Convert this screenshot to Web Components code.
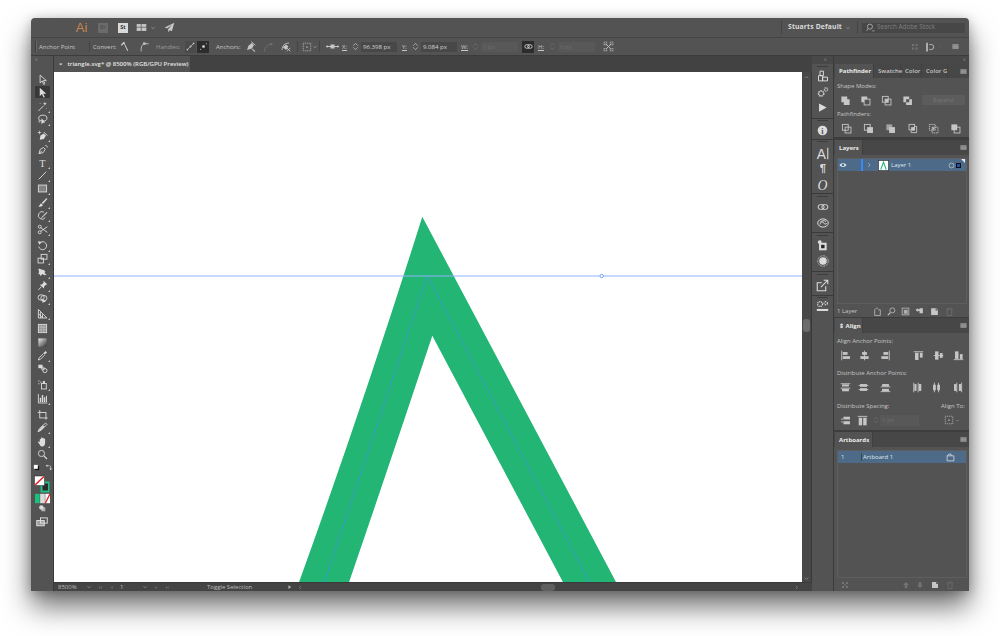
<!DOCTYPE html>
<html>
<head>
<meta charset="utf-8">
<title>triangle.svg</title>
<style>
  html, body { margin: 0; background: #fff; }
  body { box-sizing: border-box; height: 636px; padding: 18px 0 0 31px; overflow: hidden; font-family: "Open Sans", "Liberation Sans", sans-serif; }
</style>
</head>
<body>
<ai-window>
  <ai-menubar slot="top"></ai-menubar>
  <ai-controlbar slot="top"></ai-controlbar>
  <ai-toolbar slot="tools"></ai-toolbar>
  <ai-tabbar slot="doc" title-text="triangle.svg* @ 8500% (RGB/GPU Preview)"></ai-tabbar>
  <ai-canvas slot="canvas"></ai-canvas>
  <ai-vscroll slot="canvas"></ai-vscroll>
  <ai-statusbar slot="status"></ai-statusbar>
  <ai-dock slot="dock"></ai-dock>
  <ai-pathfinder slot="panels"></ai-pathfinder>
  <ai-layers slot="panels"></ai-layers>
  <ai-align slot="panels"></ai-align>
  <ai-artboards slot="panels"></ai-artboards>
</ai-window>

<script>
// Icons are drawn on a 16x16 box, class "o" means outlined.
const ICONS = {
  hollow: '<path class="o" d="M4.5 1.5v11.5l3-3 2.2 5 1.7-.8-2.1-4.6h4.2z"/>',
  solid: '<path d="M4 1v12.5l3.2-3.2 2.2 5 1.9-.8-2.2-4.8h4.4z"/>',
  wand: '<path class="o" d="M2 14.5 9.5 7"/><path d="M11.5 1l.8 2.2 2.2.8-2.2.8-.8 2.2-.8-2.2L8.5 4l2.2-.8zM4 3h1v1H4zM13 10h1v1h-1z"/>',
  lasso: '<ellipse class="o" cx="8.5" cy="6" rx="6" ry="4.3"/><path class="o" d="M4 9c-2 1-1.5 3 .5 3"/><path d="M6.5 6v9l2.2-2.2 3.3-.3z"/>',
  pen: '<path d="M4 14 5 8l5-3 3 3-3 5z"/><path class="o" d="M10 3l5 5"/><path d="M1 3h5v1H1zM3 1h1v5H3z"/>',
  curv: '<path class="o" d="M3 14 4.5 8 9.5 5l2.5 2.5-3 5z"/><path class="o" d="M3 14l4-4"/><path class="o" d="M12 2c1.5 0 3 1 3 3"/>',
  type: '<text x="8" y="14" text-anchor="middle" font-size="15" font-family="Liberation Serif, serif">T</text>',
  line: '<path class="o" d="M2.5 13.5 13.5 2.5"/>',
  rect: '<rect x="2" y="3" width="12" height="10" fill-opacity=".35"/><rect class="o" x="2" y="3" width="12" height="10"/>',
  brush: '<path d="M14 1.5 7 8.5l1.8 1.8 6.2-7.3z"/><path d="M6.3 9.5c-2.3 0-2 3-4.3 4.5 3.5.8 6.5-.3 6.3-2.6z"/>',
  shaper: '<path class="o" d="M12 11a5.5 5.5 0 1 1-2-8"/><path d="M14 3l1 1-7 7-2 1 1-2z"/>',
  scissors: '<circle class="o" cx="4" cy="4" r="2.2"/><circle class="o" cx="4" cy="12" r="2.2"/><path class="o" d="M5.5 5.5 15 12M5.5 10.5 15 4"/>',
  rotate: '<path class="o" d="M4 4.2a5.8 5.8 0 1 1-1.5 5.3"/><path d="M1.5 1.5 7 3.3 3 7z"/>',
  scale: '<rect class="o" x="1.5" y="7.5" width="8" height="7"/><rect class="o" x="6" y="2" width="8.5" height="7"/>',
  warp: '<path d="M2 3c3-2 4 2 7 1l3 2-1 3 3 2-3 1-3-2-3 3-1-3-2 1 1-4z"/>',
  pin: '<path d="M9.5 1 15 6.5l-2 .5-2.5 2.5-.5 3L4 7l3-.5L9.5 4z"/><path class="o" d="M6 10l-4 4.5"/>',
  builder: '<ellipse class="o" cx="6" cy="6.5" rx="4.5" ry="4"/><ellipse class="o" cx="10" cy="7.5" rx="4.5" ry="4"/><path d="M8 8v7l2-2 3 0z"/>',
  persp: '<path class="o" d="M2 14.5V2l12.5 12.5z"/><path class="o" d="M5 14.5V6M8 14.5V9M2 8l6.5 6.5"/>',
  mesh: '<rect x="2" y="2" width="12" height="12" fill-opacity=".45"/><rect class="o" x="2" y="2" width="12" height="12"/><path class="o" stroke-dasharray="1.5 1.5" d="M6 2v12M10 2v12M2 6h12M2 10h12"/>',
  grad: '<defs><linearGradient id="gr" x1="0" y1="0" x2="1" y2="1"><stop offset="0" stop-color="#eee"/><stop offset="1" stop-color="#333"/></linearGradient></defs><rect x="2" y="2" width="12" height="12" style="fill:url(#gr)"/>',
  drop: '<path d="M12.5 1.5l2 2-3.2 3.2-2-2z"/><path class="o" d="M9.3 5.2 3 11.5 2 14.5l3-1 6.3-6.3"/>',
  blend: '<rect x="2" y="2.5" width="6" height="5"/><circle cx="8.5" cy="8" r="3" opacity=".6"/><circle class="o" cx="11.5" cy="11" r="3"/>',
  spray: '<rect class="o" x="6.5" y="6.5" width="7" height="8"/><path d="M8.5 3h3v3.5h-3zM2 2h1.5v1.5H2zM2 6h1.5v1.5H2zM4.5 4h1.5v1.5H4.5z"/>',
  graph: '<path class="o" d="M2 1.5v13h13"/><path d="M4 7h2v6H4zM7 3h2v10H7zM10 6h2v7h-2zM13 4h1.5v9H13z"/>',
  artboard: '<rect class="o" x="4" y="5" width="9" height="8"/><path class="o" d="M1 5h3M4 1.5V5M13 13h2.5M13 13v2.5"/>',
  slice: '<path class="o" d="M12.5 1.5l2 2-8.5 8.5-4.5 2 2-4.5z"/><path d="M9 5l2 2-5 5-4 2 2-4z"/>',
  hand: '<path d="M4 9V5a1 1 0 0 1 1.8-.3V3a1 1 0 0 1 2 0v.7a1 1 0 0 1 2 0v1a1 1 0 0 1 2 0v5.5c0 3-1.8 5-4 5-2 0-3-1-4-3L1.5 9c-.5-1 1.5-1.8 2.5 0z"/>',
  zoom: '<circle class="o" cx="6.5" cy="6.5" r="4.5"/><path class="o" style="stroke-width:1.8" d="M10 10l4.5 4.5"/>',
  defaults: '<rect x="5" y="5" width="9" height="9" style="fill:#111"/><rect x="2" y="2" width="9" height="9" style="fill:#fff"/>',
  swap: '<path class="o" d="M4 4h6c2 0 3 1 3 3v5"/><path d="M5.5 1v6L1.5 4zM10 10h6l-3 4z"/>',
  cmodes: '<rect x="0" y="3" width="5" height="10" style="fill:#17c27b"/><rect x="5.5" y="3" width="5" height="10" style="fill:#ddd"/><rect x="11" y="3" width="5" height="10" style="fill:#fff"/><path d="M11 13l5-10" stroke="#e01f26" stroke-width="1.4"/>',
  draw: '<circle cx="6" cy="6" r="4"/><rect x="6" y="6" width="7" height="7" opacity=".7"/>',
  screen: '<rect class="o" x="6" y="2.5" width="9" height="7"/><rect x="1" y="6" width="10" height="7" fill-opacity=".55"/><rect class="o" x="1" y="6" width="10" height="7"/>',
  plane: '<path d="M15 1 1 8l3.5 1.5L11 4.5 6 10.5V15l2.5-3 3 1.5z"/>',
  workspace: '<rect x="1" y="3" width="6" height="4"/><rect x="8" y="3" width="7" height="4"/><rect x="1" y="8" width="6" height="5"/><rect x="8" y="8" width="7" height="5"/>',
  chev: '<path class="o" d="M4 6l4 4 4-4"/>',
  chevup: '<path class="o" d="M4 10l4-4 4 4"/>',
  chevr: '<path class="o" d="M6 3l5 5-5 5"/>',
  chevl: '<path class="o" d="M10 3 5 8l5 5"/>',
  mag: '<circle class="o" cx="7" cy="6.5" r="4.5"/><path class="o" d="M3.5 10 1 14M11 13l2 2 2-2"/>',
  conv1: '<path d="M7 1 2.5 5.5 4 7l3-3 5 10.5 1.5-.8z"/><circle cx="7" cy="3" r="1.5"/>',
  conv2: '<path class="o" d="M3 15c0-7 2-11 5-11h6"/><rect x="6" y="2" width="3.5" height="3.5"/>',
  handle1: '<path class="o" d="M2 14 14 2"/><rect x="6.5" y="6.5" width="3" height="3"/><circle cx="2.5" cy="13.5" r="1.5"/><circle cx="13.5" cy="2.5" r="1.5"/>',
  handle2: '<rect x="6" y="6" width="4" height="4"/><circle cx="3" cy="13" r=".9"/><circle cx="13" cy="3" r=".9"/>',
  anch1: '<path d="M3 13 5 7l5-4 3 3-3 5z"/><path class="o" d="M9 1l6 5"/><path d="M11 11l4 4-1 1-4-4z"/>',
  anch2: '<path class="o" d="M2 15C3 8 7 4 14 3"/><rect x="12" y="1.5" width="3" height="3"/>',
  anch3: '<path class="o" d="M3 13c0-6 4-10 10-10"/><path d="M4 9l5-4 3 3-3 5z"/><path class="o" d="M10 10l5 5M15 10l-5 5"/>',
  dash: '<rect class="o" stroke-dasharray="1.6 1.6" x="2" y="2" width="12" height="12"/><path d="M7 7h2v2H7z"/>',
  aline: '<path class="o" d="M0 8h16"/><rect x="5.5" y="5.5" width="5" height="5"/><circle cx="1.5" cy="8" r="1.3"/><circle cx="14.5" cy="8" r="1.3"/>',
  step: '<path class="o" d="M4 6.5l4-4 4 4M4 9.5l4 4 4-4"/>',
  link: '<rect class="o" x="1.5" y="4.8" width="8" height="6.4" rx="3.2"/><rect class="o" x="6.5" y="4.8" width="8" height="6.4" rx="3.2"/>',
  xform: '<path class="o" d="M4 4l8 8M12 4l-8 8"/><path d="M1 1h5v5H1zM10 1h5v5h-5zM1 10h5v5H1zM10 10h5v5h-5z" fill-opacity=".8"/><path class="o" style="stroke:#535353" d="M2.5 2.5h2v2h-2zM11.5 2.5h2v2h-2zM2.5 11.5h2v2h-2zM11.5 11.5h2v2h-2z"/>',
  dots: '<path d="M2 2h4v4H2zM9 2h4v4H9zM2 9h4v4H2zM9 9h4v4H9z"/>',
  alignto: '<path d="M2 1h2.5v14H2z"/><path class="o" d="M7 4h3a4 4 0 0 1 0 8H7"/>',
  menu: '<path d="M1 3h14v10H1z" fill-opacity=".75"/><path d="M1 6h14M1 9.5h14" stroke="#535353" stroke-width="1"/>',
  // dock
  library: '<path class="o" d="M4 1.5h4.5v6H4zM2 7.5h5.5v7H2zM7.5 9.5H14v5H7.5z"/>',
  gears: '<circle class="o" style="stroke-width:2" stroke-dasharray="2 1" cx="5.5" cy="10" r="3.5"/><circle class="o" style="stroke-width:1.6" stroke-dasharray="1.5 1" cx="12" cy="4.5" r="2.2"/>',
  play: '<path d="M3 2l11 6-11 6z"/>',
  info: '<circle cx="8" cy="8" r="7"/><text x="8" y="12.5" text-anchor="middle" font-size="12" font-weight="700" font-family="Liberation Serif, serif" style="fill:#535353">i</text>',
  charA: '<text x="6.5" y="14.5" text-anchor="middle" font-size="17" font-family="Liberation Sans, sans-serif">A</text><path class="o" d="M14.5 1v14"/>',
  para: '<text x="8" y="13.5" text-anchor="middle" font-size="15" font-weight="700" font-family="Liberation Sans, sans-serif">¶</text>',
  italicO: '<text x="8" y="14" text-anchor="middle" font-size="17" font-style="italic" font-family="Liberation Serif, serif">O</text>',
  cc: '<ellipse class="o" cx="8" cy="8" rx="7" ry="5.5"/><path class="o" d="M4 10c1-4 4-4 5-2s3 2 4 0M4 7c2-2 6-3 8-1"/>',
  symbol: '<rect x="3" y="4" width="11" height="11"/><rect x="6" y="7" width="5" height="5" style="fill:#262626"/><circle cx="4" cy="3" r="2.8"/>',
  burst: '<circle cx="8" cy="8" r="5"/><circle class="o" stroke-dasharray="1 1" cx="8" cy="8" r="7"/>',
  exportI: '<path class="o" d="M12 9v5.5H1.5V4.5H7"/><path class="o" d="M6 10l8-8M9.5 1.500h5v5"/>',
  gears2: '<circle class="o" style="stroke-width:1.6" stroke-dasharray="1.5 1" cx="5" cy="5" r="3"/><circle class="o" style="stroke-width:1.4" stroke-dasharray="1.5 1" cx="12" cy="4" r="2"/><rect x="1" y="11" width="14" height="2.5"/>',
  // pathfinder
  unite: '<path d="M2 2h8.5v4H14v8.5H5.5V10.5H2z"/>',
  minus: '<path d="M2 2h8.5v4H6v4.5H2z"/><rect class="o" x="6" y="6" width="8.5" height="8.5"/>',
  inter: '<rect class="o" x="2" y="2" width="8.5" height="8.5"/><rect class="o" x="6" y="6" width="8.5" height="8.5"/><rect x="6" y="6" width="4.5" height="4.5"/>',
  exclude: '<path d="M2 2h8.5v4H6v4.5H2zM10.5 6H14.5v8.5H6v-4h4.5z"/>',
  divide: '<rect class="o" x="2" y="2" width="8.5" height="8.5"/><rect class="o" x="6" y="6" width="8.5" height="8.5"/>',
  trim: '<rect class="o" x="2" y="2" width="8.5" height="8.5"/><rect x="6" y="6" width="8.5" height="8.5"/>',
  merge: '<rect x="2" y="2" width="8.5" height="8.5" opacity=".7"/><rect x="6" y="6" width="8.5" height="8.5"/>',
  crop: '<rect class="o" x="3" y="2" width="8" height="8"/><rect x="6" y="6" width="5" height="5"/><path class="o" d="M11 5h3v9H6v-3"/>',
  outline: '<rect class="o" stroke-dasharray="2 1" x="2" y="2" width="8.5" height="8.5"/><rect class="o" stroke-dasharray="2 1" x="6" y="6" width="8.5" height="8.5"/><rect x="6.5" y="6.5" width="3" height="3"/>',
  minusb: '<rect x="2" y="2" width="8.5" height="8.5"/><rect class="o" x="6" y="6" width="8.5" height="8.5"/>',
  // align
  aL: '<path class="o" d="M2.5 1v14"/><rect x="4" y="3" width="7" height="4"/><rect x="4" y="9" width="10.5" height="4"/>',
  aC: '<path class="o" d="M8 1v14"/><rect x="4.5" y="3" width="7" height="4"/><rect x="2" y="9" width="12" height="4"/>',
  aR: '<path class="o" d="M13.5 1v14"/><rect x="5" y="3" width="7" height="4"/><rect x="2" y="9" width="10" height="4"/>',
  aT: '<path class="o" d="M1 2.5h14"/><rect x="3" y="4" width="5" height="10.5"/><rect x="10" y="4" width="4" height="7"/>',
  aM: '<path class="o" d="M1 8h14"/><rect x="3" y="2" width="5" height="12"/><rect x="10" y="4.5" width="4" height="7"/>',
  aB: '<path class="o" d="M1 14h14"/><rect x="3" y="2" width="5" height="11"/><rect x="10" y="6" width="4" height="7"/>',
  dT: '<path class="o" d="M1 2.5h14M1 9h14"/><rect x="3" y="3.5" width="10" height="3"/><rect x="3" y="10" width="10" height="3.5"/>',
  dM: '<path class="o" d="M1 5h14M1 11h14"/><rect x="3" y="3" width="10" height="4"/><rect x="3" y="9" width="10" height="4"/>',
  dB: '<path class="o" d="M1 7h14M1 14h14"/><rect x="3" y="3" width="10" height="3.5"/><rect x="3" y="10" width="10" height="3.5"/>',
  dL: '<path class="o" d="M2.5 1v14M9 1v14"/><rect x="3.5" y="3" width="3" height="10"/><rect x="10" y="3" width="3.5" height="10"/>',
  dC: '<path class="o" d="M5 1v14M11 1v14"/><rect x="3" y="4" width="4" height="8"/><rect x="9" y="4" width="4" height="8"/>',
  dR: '<path class="o" d="M7 1v14M14 1v14"/><rect x="3" y="3" width="3.5" height="10"/><rect x="10" y="3" width="3.5" height="10"/>',
  sH: '<path d="M2 5h2v2H2zM2 9h2v2H2z"/><rect x="5" y="2.5" width="9.5" height="4"/><rect x="5" y="9" width="9.5" height="4.5"/>',
  sV: '<rect x="2.5" y="4" width="5" height="11"/><rect x="9" y="4" width="5" height="11"/><path class="o" d="M1 2h14"/>',
  // layers
  eye: '<path d="M1 8c3-5 11-5 14 0-3 5-11 5-14 0z"/><circle cx="8" cy="8" r="2.5" style="fill:#4d6a88"/>',
  target: '<circle class="o" cx="8" cy="8" r="5.5"/>',
  sublayer: '<path class="o" d="M3 5v10h10V5h-4M3 5l3-3h3"/>',
  search: '<circle class="o" cx="9.5" cy="6" r="4.5"/><path class="o" style="stroke-width:2" d="M6 10l-4.5 4.5"/>',
  clip: '<rect class="o" x="2" y="2" width="12" height="12"/><rect x="5" y="5" width="7" height="7" opacity=".8"/>',
  newsub: '<path d="M1 5l4-3v2h3V2h6v9H8V7H5v2z"/>',
  newlayer: '<path d="M2 2h9l3 3v9H2z"/><path style="fill:#535353" d="M10 2l4 4h-4z"/>',
  trash: '<path class="o" d="M4 4v11h8V4M2 3.5h12M6 2h4"/>',
  abthumb: '<path class="o" d="M2 5h12v9H2zM2 5l3-3h4v3"/>',
  gather: '<path d="M2 2h4v4H2zM10 2h4v4h-4zM2 10h4v4H2zM10 10h4v4h-4z"/><path class="o" d="M6 6l4 4M10 6l-4 4"/>',
  up: '<path d="M8 2l6 6h-3.5v6h-5V8H2z"/>',
  down: '<path d="M8 14 2 8h3.5V2h5v6H14z"/>',
  first: '<path d="M3 3h2v10H3zM13 3v10L6 8z"/>',
  prev: '<path d="M12 3v10L5 8z"/>',
  next: '<path d="M4 3v10l7-5z"/>',
  last: '<path d="M11 3h2v10h-2zM3 3v10l7-5z"/>',
  thumb: '<rect x=".5" y=".5" width="15" height="15" style="fill:#fff" stroke="#2f2f2f"/><path class="o" style="stroke:#22b573;stroke-width:1.6" d="M4 14 8 3l4 11"/>'
};

function icon(name, size = 11, cls = '') {
  return `<svg class="${cls}" width="${size}" height="${size}" viewBox="0 0 16 16">${ICONS[name]}</svg>`;
}

// items are [left x, width, html]. Gaps are margins, so the row stays plain flex flow.
function strip(origin, items) {
  let cur = origin;
  return items.map(([x, w, html]) => {
    const m = +(x - cur).toFixed(2);
    cur = x + w;
    return `<span class="cell" style="margin-left:${m}px;width:${w}px">${html}</span>`;
  }).join('');
}
const ic = (cx, name, size = 11, cls = '') => [cx - size / 2, size, icon(name, size, cls)];
const txt = (x, w, s, cls = '') => [x, w, `<span class="lbl ${cls}">${s}</span>`];
const sep = (x) => [x, 1, '<i class="sep"></i>'];
const row = (origin, h, mt, items) =>
  `<div class="row" style="height:${h}px;margin-top:${mt}px">${strip(origin, items)}</div>`;

// column flow: items are [center y, height, html]
function vflow(origin, items) {
  let cur = origin;
  return items.map(([y, h, html]) => {
    const m = +(y - h / 2 - cur).toFixed(2);
    cur = y + h / 2;
    return `<div class="vcell" style="margin-top:${m}px;height:${h}px">${html}</div>`;
  }).join('');
}

const SHARED = `
  * { box-sizing: border-box; }
  :host { display: block; box-sizing: border-box; flex: none; color: #c6c6c6; font-size: 6px; line-height: 1; }
  svg { display: block; flex: none; fill: currentColor; overflow: visible; }
  .o { fill: none; stroke: currentColor; stroke-width: 1.3; }
  .dim { opacity: .28; }
  .row { display: flex; align-items: center; }
  .cell { display: flex; align-items: center; justify-content: center; flex: none; height: 100%; white-space: nowrap; }
  .vcell { display: flex; align-items: center; justify-content: center; flex: none; position: relative; }
  .lbl { width: 100%; white-space: nowrap; }
  .sep { display: block; width: 1px; height: 70%; background: #444; }
`;

class AiBase extends HTMLElement {
  connectedCallback() {
    if (this.shadowRoot) return;
    this.attachShadow({mode: 'open'});
    this.shadowRoot.innerHTML = `<style>${SHARED}${this.css()}</style>${this.html()}`;
  }
  css() { return ''; }
  html() { return '<slot></slot>'; }
}

class AiWindow extends AiBase {
  css() { return `
    :host { width: 938px; height: 573px; background: #535353; border-radius: 4px 4px 0 0;
      box-shadow: 0 16px 28px rgba(0,0,0,.55), 0 2px 12px rgba(0,0,0,.25); font-family: "Open Sans", "Liberation Sans", sans-serif; }
    .main { display: flex; height: 535px; }
    .doc { width: 758px; flex: none; display: flex; flex-direction: column; }
    .mid { display: flex; height: 510px; }
    .panels { width: 135px; flex: none; background: #3d3d3d; }
  `; }
  html() { return `
    <slot name="top"></slot>
    <div class="main">
      <slot name="tools"></slot>
      <div class="doc">
        <slot name="doc"></slot>
        <div class="mid"><slot name="canvas"></slot></div>
        <slot name="status"></slot>
      </div>
      <slot name="dock"></slot>
      <div class="panels"><slot name="panels"></slot></div>
    </div>`; }
}

class AiMenubar extends AiBase {
  css() { return `
    :host { height: 20px; border-bottom: 1px solid #454545; border-radius: 4px 4px 0 0; }
    .row { height: 19px; }
    .ai { color: #c8844f; font: 13px "Liberation Sans", sans-serif; }
    .box { display: flex; width: 100%; height: 10px; align-items: center; justify-content: center; font-weight: 700; font-size: 5.5px; }
    .br { background: #6b6b6b; color: #555; }
    .st { background: #d9d9d9; color: #333; }
    .name { font-size: 6.8px; font-weight: 700; color: #dcdcdc; letter-spacing: .15px; }
    .search { display: flex; align-items: center; gap: 2px; width: 100%; height: 10px; padding-left: 4px; background: #474747; color: #7f7f7f; font-size: 6.3px; }
    .search svg { color: #c0c0c0; }
  `; }
  html() {
    return `<div class="row">${strip(31, [
      [76, 11, '<span class="ai">Ai</span>'],
      [98, 10, '<span class="box br">Br</span>'],
      [118, 10, '<span class="box st">St</span>'],
      ic(141.5, 'workspace', 11),
      ic(153, 'chev', 6),
      ic(169, 'plane', 11),
      sep(780.5),
      txt(788, 52, 'Stuarts Default', 'name'),
      ic(847.5, 'chev', 6),
      sep(857),
      [862, 103, `<span class="search">${icon('mag', 9)}<span>Search Adobe Stock</span></span>`]
    ])}</div>`;
  }
}

class AiControlbar extends AiBase {
  css() { return `
    :host { height: 18px; border-bottom: 1px solid #3c3c3c; }
    .row { height: 17px; }
    .btn { display: flex; width: 100%; height: 12px; align-items: center; justify-content: center; background: #4a4a4a; }
    .btn.on { background: #2c2c2c; color: #eee; }
    .grip { display: block; width: 1px; height: 11px; background: #3f3f3f; box-shadow: 1px 0 #666; }
    .u { text-decoration: underline; }
    .input { display: block; width: 100%; height: 10px; padding: 2px 0 0 2px; background: #484848; color: #d4d4d4; font-size: 6.1px; }
    .off { background: #585858; color: #6e6e6e; }
    .mut { color: #9a9a9a; }
  `; }
  html() {
    const field = (x, w, s, cls = '') => [x, w, `<span class="input ${cls}">${s}</span>`];
    return `<div class="row">${strip(31, [
      [34, 2, '<i class="grip"></i>'],
      txt(39, 35, 'Anchor Point'),
      sep(89),
      txt(93, 22, 'Convert:'),
      ic(124, 'conv1'),
      ic(144, 'conv2'),
      txt(156, 23, 'Handles:', 'mut'),
      [185, 11, `<span class="btn">${icon('handle1', 9)}</span>`],
      [197, 12, `<span class="btn on">${icon('handle2', 9)}</span>`],
      txt(216, 24, 'Anchors:'),
      ic(250, 'anch1'),
      ic(268, 'anch2', 10, 'dim'),
      ic(285, 'anch3'),
      sep(296.5),
      ic(307, 'dash', 10),
      ic(315, 'chev', 6),
      sep(319),
      ic(332, 'aline', 13),
      txt(342, 6, 'X:', 'u'),
      ic(355.5, 'step', 9),
      field(361, 36, '96.398 px'),
      txt(402, 6, 'Y:', 'u'),
      ic(415.5, 'step', 9),
      field(421, 36, '9.084 px'),
      txt(461, 6, 'W:', 'u'),
      ic(475.5, 'step', 9, 'dim'),
      field(481, 37, '0 px', 'off'),
      [522, 12, `<span class="btn on">${icon('link', 9)}</span>`],
      txt(538, 6, 'H:', 'u'),
      ic(552.5, 'step', 9, 'dim'),
      field(558, 37, '0 px', 'off'),
      ic(608.5, 'xform', 11),
      ic(915, 'dots', 8, 'dim'),
      ic(930, 'alignto', 10),
      ic(939.5, 'chev', 5, 'dim'),
      ic(955, 'menu', 7)
    ])}</div>`;
  }
}

class AiToolbar extends AiBase {
  css() { return `
    :host { width: 23px; height: 535px; background: #535353; border-right: 1px solid #3a3a3a; color: #dcdcdc; }
    .top { display: block; color: #9a9a9a; font-size: 5px; padding: 1px 0 0 4px; height: 7px; letter-spacing: -.5px; }
    .sel { width: 15px; height: 12px; background: #383838; }
    .vcell { width: 22px; }
    .more::after { content: ""; position: absolute; right: 3px; bottom: 0; border: 1.2px solid transparent; border-right-color: #ccc; border-bottom-color: #ccc; }
  `; }
  html() {
    const T = [
      ['hollow', 79], ['solid', 92, 'sel'], ['wand', 106, 'more'], ['lasso', 119, 'more'],
      ['pen', 135, 'more'], ['curv', 149], ['type', 162, 'more'], ['line', 175, 'more'], ['rect', 188, 'more'],
      ['brush', 202, 'more'], ['shaper', 215, 'more'], ['scissors', 229, 'more'], ['rotate', 245, 'more'],
      ['scale', 258, 'more'], ['warp', 272, 'more'], ['pin', 285, 'more'], ['builder', 298, 'more'],
      ['persp', 313, 'more'], ['mesh', 328], ['grad', 342], ['drop', 355, 'more'], ['blend', 368],
      ['spray', 384, 'more'], ['graph', 398, 'more'], ['artboard', 414], ['slice', 427, 'more'],
      ['hand', 441, 'more'], ['zoom', 454]
    ];
    const items = T.map(([n, y, c]) => [y - 56 - 7, 13,
      c === 'sel' ? `<div class="row sel" style="justify-content:center">${icon(n, 11)}</div>` :
      c === 'more' ? `<div class="more" style="position:absolute;inset:0;display:flex;align-items:center;justify-content:center">${icon(n, 11)}</div>` : icon(n, 11)]);
    items.push([467.5 - 63, 8, `<div class="row" style="width:22px;height:8px;gap:5px;padding-left:2px">${icon('defaults', 7)}${icon('swap', 7)}</div>`]);
    items.push([484 - 63, 22, `<svg width="22" height="22" viewBox="0 0 22 22">
      <rect x="9.5" y="8.5" width="9" height="11" style="fill:#1fc083"/><rect x="11.5" y="10.5" width="5.5" height="7" style="fill:#2b2b2b"/>
      <rect x="3.5" y="3" width="10" height="9.5" style="fill:#fff" stroke="#222" stroke-width=".5"/><path d="M4 12 13 3.5" stroke="#e01f26" stroke-width="1.5"/></svg>`]);
    items.push([498 - 63, 7, icon('cmodes', 15)]);
    items.push([508.5 - 63, 10, icon('draw', 9)]);
    items.push([522 - 63, 11, icon('screen', 12)]);
    return `<span class="top">»</span>${vflow(0, items)}`;
  }
}

class AiTabbar extends AiBase {
  css() { return `
    :host { height: 16px; background: #424242; }
    .tab { display: flex; align-items: center; width: 136px; height: 16px; background: #535353; color: #e4e4e4; font-weight: 600; padding-left: 5px; gap: 5px; white-space: nowrap; }
  `; }
  html() {
    return `<div class="tab"><span>×</span><span>${this.getAttribute('title-text')}</span></div>`;
  }
}

class AiCanvas extends AiBase {
  css() { return `
    :host { width: 748px; height: 510px; background: #fff; }
    svg { width: 748px; height: 510px; }
  `; }
  html() { return `
    <svg viewBox="54 72 748 510">
      <path style="fill:#22b573" d="M422.3 216.7 616 582H562.9L432.3 335.7Q392 457 349.1 582H299.1Q363 405 422.3 216.7Z"/>
      <path style="fill:none" stroke="#3f8fe8" stroke-width=".7" d="M324.3 582 427.3 276 589.5 582"/>
      <path stroke="#8fb2ff" stroke-width="1" d="M54 276H802"/>
      <rect x="600" y="274.3" width="3.4" height="3.4" rx="1.7" style="fill:#fff" stroke="#6f9bf5" stroke-width=".9"/>
    </svg>`; }
}

class AiVscroll extends AiBase {
  css() { return `
    :host { width: 10px; height: 510px; background: #484848; border-right: 1px solid #383838; color: #aaa; }
    .thumb { width: 7px; height: 13px; border-radius: 3px; background: #6c6c6c; margin-left: 1px; }
    svg { margin-left: 1px; }
  `; }
  html() {
    return `<div style="height:2px"></div>${icon('chevup', 7)}
      <div style="height:238px"></div><div class="thumb"></div>
      <div style="height:243px"></div>${icon('chev', 7)}`;
  }
}

class AiStatusbar extends AiBase {
  css() { return `
    :host { height: 9px; background: #444; border-top: 1px solid #3a3a3a; color: #bdbdbd; }
    .row { height: 8px; }
    .thumb { display: block; width: 100%; height: 7px; border-radius: 3px; background: #5f5f5f; }
  `; }
  html() {
    return `<div class="row">${strip(54, [
      txt(58, 20, '8500%'),
      ic(89, 'chev', 6),
      ic(100, 'first', 5, 'dim'), ic(111, 'prev', 5, 'dim'),
      txt(120, 4, '1'),
      ic(145, 'chev', 6),
      ic(156, 'next', 5, 'dim'), ic(167, 'last', 5, 'dim'),
      txt(207, 46, 'Toggle Selection'),
      ic(290, 'next', 6),
      ic(300, 'chevl', 5),
      [541, 14, '<i class="thumb"></i>'],
      ic(796, 'chevr', 5)
    ])}</div>`;
  }
}

class AiDock extends AiBase {
  css() { return `
    :host { width: 22px; height: 535px; background: #535353; border-right: 1px solid #3a3a3a; color: #dcdcdc; }
    .vcell { width: 21px; }
    .top { color: #9a9a9a; font-size: 5px; height: 8px; background: #484848; padding: 1px 0 0 12px; letter-spacing: -.5px; }
    .line { width: 21px; height: 1px; background: #3a3a3a; }
    .grip { width: 11px; height: 1px; background: #3d3d3d; }
  `; }
  html() {
    const I = (y, n, s = 12) => [y - 64, 12, icon(n, s)];
    const L = (y) => [y - 64, 1, '<div class="line"></div>'];
    const G = (y) => [y - 64, 1, '<div class="grip"></div>'];
    return `<div class="top">«</div>${vflow(0, [
      G(66), I(76, 'library'), I(92, 'gears'), I(107, 'play', 11), L(118),
      G(120.5), I(130, 'info', 11), L(139),
      G(141.5), I(153, 'charA', 13), I(168, 'para'), I(185, 'italicO', 13), L(193),
      G(196), I(207, 'link', 12), I(223, 'cc', 12), L(232),
      G(235), I(245, 'symbol', 11), I(261, 'burst', 12), L(271),
      G(274), I(285, 'exportI', 13), L(295),
      G(297.5), I(306, 'gears2', 13)
    ])}`;
  }
}

// A docked panel: tab strip on top, whatever the user passes goes in the slot.
class AiPanel extends AiBase {
  css() { return `
    :host { background: #535353; }
    .tabs { display: flex; align-items: stretch; height: var(--tabs-h, 15px); background: #474747; padding-left: 1px; }
    .t { display: flex; align-items: center; padding: 0 0 0 4px; white-space: nowrap; color: #c4c4c4; border-right: 1px solid #3f3f3f; font-weight: 600; }
    .t.on { background: #535353; color: #ececec; font-weight: 700; }
    .m { margin: auto 2px auto auto; }
    .body { display: flow-root; height: var(--body-h); }
  `; }
  html() {
    const tabs = this.getAttribute('tabs').split(',').map((t, i) => {
      const [name, w] = t.split(':');
      return `<span class="t ${i ? '' : 'on'}" style="width:${w}px">${name}</span>`;
    }).join('');
    return `<div class="tabs">${tabs}${icon('menu', 7, 'm')}</div><div class="body"><slot></slot></div>`;
  }
}

const BODY_CSS = `
  .frame { margin: 3px 2px 0 3px; border: 1px solid #5e5e5e; }
  .sel { background: #4d6a88; color: #dfe6ee; }
  .exp { display: block; width: 100%; height: 10px; padding-top: 2px; text-align: center; background: #5c5c5c; color: #777; }
  .bar { display: block; width: 2px; height: 12px; background: #3d86f5; }
  .tgt { display: block; width: 5px; height: 5px; background: #2451a8; border: 1px solid #111; }
  .corner { width: 0; height: 0; border-style: solid; border-width: 0 4px 4px 0; border-color: transparent #e8e8e8 transparent transparent; align-self: flex-start; }
  .stepf { display: block; width: 100%; height: 11px; padding: 2px 0 0 2px; background: #585858; color: #6e6e6e; }
`;

class AiPathfinder extends AiBase {
  css() { return BODY_CSS + `:host { margin-bottom: 3px; } .strip { height: 8px; background: #484848; color: #9a9a9a; font-size: 5px; text-align: right; padding: 1px 4px 0 0; letter-spacing: -.5px; }`; }
  html() {
    const I = (xs, ns) => xs.map((x, i) => ic(x, ns[i], 11));
    return `<div class="strip">»</div>
    <ai-panel tabs="Pathfinder:39,Swatche:27,Color:21,Color G:26" style="--tabs-h:14px;--body-h:59px">
      ${row(834, 8, 4, [txt(837, 40, 'Shape Modes:')])}
      ${row(834, 14, 3, [...I([845, 865.7, 886.7, 907.7], ['unite', 'minus', 'inter', 'exclude']), [922, 43, '<span class="exp">Expand</span>']])}
      ${row(834, 8, 3, [txt(837, 40, 'Pathfinders:')])}
      ${row(834, 14, 3, I([846, 868, 890, 912, 933, 955], ['divide', 'trim', 'merge', 'crop', 'outline', 'minusb']))}
    </ai-panel>`;
  }
}

class AiLayers extends AiBase {
  css() { return BODY_CSS + ':host { margin-bottom: 1px; }'; }
  html() {
    const foot = [['sublayer', 877], ['search', 891.7], ['clip', 905.5], ['newsub', 920], ['newlayer', 935], ['trash', 950, 'dim']];
    return `<ai-panel tabs="Layers:28" style="--body-h:162px">
      <div class="frame" style="height:146px">
        <div class="row sel" style="height:12px">${strip(838, [
          ic(843, 'eye', 8),
          [861, 2, '<i class="bar"></i>'],
          ic(869, 'chevr', 6),
          ic(883, 'thumb', 11),
          txt(891, 22, 'Layer 1'),
          ic(951, 'target', 7),
          [956, 5, '<i class="tgt"></i>'],
          [961, 4, '<i class="corner"></i>']
        ])}</div>
      </div>
      ${row(834, 12, 1, [txt(837, 22, '1 Layer'), ...foot.map(([n, x, c]) => ic(x, n, 9, c || ''))])}
    </ai-panel>`;
  }
}

class AiAlign extends AiBase {
  css() { return BODY_CSS + ':host { margin-bottom: 2px; }'; }
  html() {
    const I = (xs, ns) => xs.map((x, i) => ic(x, ns[i], 11));
    return `<ai-panel tabs="⇕ Align:28" style="--body-h:97px">
      ${row(834, 8, 4, [txt(837, 60, 'Align Anchor Points:')])}
      ${row(834, 14, 3, I([845, 864, 885, 918, 938, 958], ['aL', 'aC', 'aR', 'aT', 'aM', 'aB']))}
      ${row(834, 8, 7, [txt(837, 70, 'Distribute Anchor Points:')])}
      ${row(834, 14, 3, I([845, 863, 885, 917, 936, 957], ['dT', 'dM', 'dB', 'dL', 'dC', 'dR']))}
      ${row(834, 8, 8, [txt(837, 55, 'Distribute Spacing:'), txt(941, 25, 'Align To:')])}
      ${row(834, 14, 3, [ic(845, 'sH', 11), ic(862, 'sV', 11), ic(876, 'step', 8, 'dim'), [880, 39, '<span class="stepf">0 px</span>'], ic(949, 'dash', 10), ic(957, 'chev', 5)])}
    </ai-panel>`;
  }
}

class AiArtboards extends AiBase {
  css() { return BODY_CSS; }
  html() {
    const foot = [['gather', 845, 'dim'], ['up', 906, 'dim'], ['down', 920, 'dim'], ['newlayer', 935], ['trash', 950, 'dim']];
    return `<ai-panel tabs="Artboards:38" style="--body-h:144px">
      <div class="frame" style="height:128px">
        <div class="row sel" style="height:12px">${strip(838, [
          txt(841, 4, '1'),
          sep(861),
          txt(863, 30, 'Artboard 1'),
          ic(950, 'abthumb', 9)
        ])}</div>
      </div>
      ${row(834, 12, 1, foot.map(([n, x, c]) => ic(x, n, 8, c || '')))}
    </ai-panel>`;
  }
}

const ELEMENTS = {
  'ai-panel': AiPanel, 'ai-menubar': AiMenubar, 'ai-controlbar': AiControlbar, 'ai-toolbar': AiToolbar,
  'ai-tabbar': AiTabbar, 'ai-canvas': AiCanvas, 'ai-vscroll': AiVscroll, 'ai-statusbar': AiStatusbar,
  'ai-dock': AiDock, 'ai-pathfinder': AiPathfinder, 'ai-layers': AiLayers, 'ai-align': AiAlign,
  'ai-artboards': AiArtboards, 'ai-window': AiWindow
};
Object.keys(ELEMENTS).forEach((name) => customElements.define(name, ELEMENTS[name]));
</script>
</body>
</html>
